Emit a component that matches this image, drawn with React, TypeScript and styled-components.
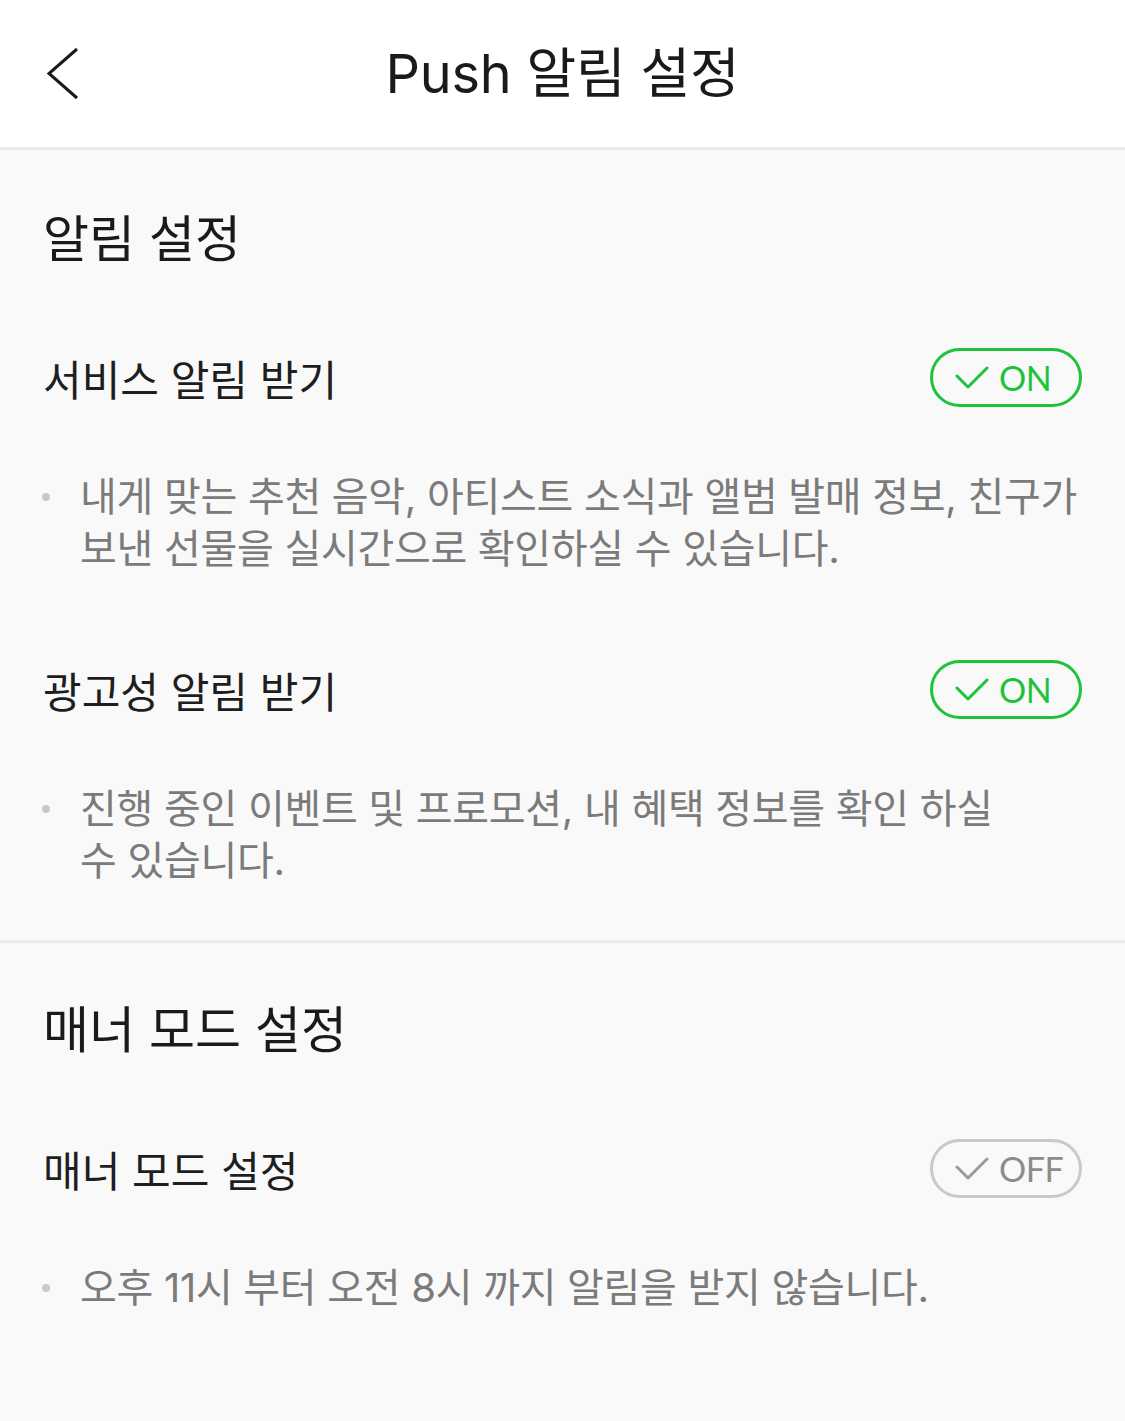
import React from 'react';
import styled, { createGlobalStyle } from 'styled-components';

type ToggleProps = {
  on?: boolean
}

type SettingItem = {
  label: string,
  on: boolean,
  lines: string[]
}

type SettingSection = {
  title: string,
  items: SettingItem[]
}

const sections: SettingSection[] = [
  {
    title: '알림 설정',
    items: [
      {
        label: '서비스 알림 받기',
        on: true,
        lines: [
          '내게 맞는 추천 음악, 아티스트 소식과 앨범 발매 정보, 친구가',
          '보낸 선물을 실시간으로 확인하실 수 있습니다.'
        ]
      },
      {
        label: '광고성 알림 받기',
        on: true,
        lines: [
          '진행 중인 이벤트 및 프로모션, 내 혜택 정보를 확인 하실',
          '수 있습니다.'
        ]
      }
    ]
  },
  {
    title: '매너 모드 설정',
    items: [
      {
        label: '매너 모드 설정',
        on: false,
        lines: ['오후 11시 부터 오전 8시 까지 알림을 받지 않습니다.']
      }
    ]
  }
];

const Toggle: React.FC<ToggleProps> = ({ on }) => (
  <ToggleButton on={on}>
    <svg width="34" height="24" viewBox="0 0 34 24" fill="none">
      <polyline points="2,10 13,21 32,2" stroke="currentColor" strokeWidth="3" strokeLinecap="round" strokeLinejoin="round" />
    </svg>
    <ToggleText>{on ? 'ON' : 'OFF'}</ToggleText>
  </ToggleButton>
);

const App: React.FC = () => {
  return (
    <>
      <GlobalStyle />
      <Page>
        <Header>
          <BackButton aria-label="뒤로">
            <svg width="34" height="54" viewBox="0 0 34 54" fill="none">
              <polyline points="31,2 3,26.5 31,51" stroke="#1a1a1a" strokeWidth="3" strokeLinejoin="miter" />
            </svg>
          </BackButton>
          <Title>Push 알림 설정</Title>
          <span />
        </Header>
        {sections.map((section) => (
          <Section key={section.title}>
            <SectionTitle>{section.title}</SectionTitle>
            <ItemList>
              {section.items.map((item) => (
                <Item key={item.label}>
                  <Row>
                    <RowLabel>{item.label}</RowLabel>
                    <Toggle on={item.on} />
                  </Row>
                  <Description>
                    <Bullet><Dot /></Bullet>
                    <DescText>
                      {item.lines.map((line) => <div key={line}>{line}</div>)}
                    </DescText>
                  </Description>
                </Item>
              ))}
            </ItemList>
          </Section>
        ))}
      </Page>
    </>
  );
}

const GlobalStyle = createGlobalStyle`
  html, body {
    margin: 0;
    padding: 0;
    background: #f9f9f9;
  }
  body {
    font-family: Inter, "Noto Sans CJK KR", sans-serif;
    -webkit-font-smoothing: antialiased;
  }
`;

const Page = styled.div`
  width: 1125px;
  min-height: 1421px;
  background: #f9f9f9;
`;

const Header = styled.header`
  display: grid;
  grid-template-columns: 1fr auto 1fr;
  align-items: center;
  height: 147px;
  background: #ffffff;
  border-bottom: 3px solid #ebebeb;
`;

const BackButton = styled.button`
  justify-self: start;
  display: flex;
  align-items: center;
  margin-left: 46px;
  padding: 0;
  border: none;
  background: none;
  cursor: pointer;
`;

const Title = styled.h1`
  margin: 0;
  font-size: 54px;
  font-weight: 400;
  color: #1a1a1a;
  letter-spacing: -0.2px;
  line-height: 1;
`;

const Section = styled.section`
  padding: 59px 43px 53px;
  & + & {
    border-top: 3px solid #ebebeb;
    padding-top: 57px;
  }
`;

const SectionTitle = styled.h2`
  margin: 0 0 79px;
  height: 60px;
  line-height: 60px;
  font-size: 50px;
  font-weight: 400;
  color: #1a1a1a;
`;

const ItemList = styled.div`
  display: flex;
  flex-direction: column;
  gap: 85px;
`;

const Item = styled.div`
  display: flex;
  flex-direction: column;
  gap: 64px;
`;

const Row = styled.div`
  display: flex;
  align-items: center;
  justify-content: space-between;
  height: 59px;
`;

const RowLabel = styled.div`
  font-size: 42px;
  color: #1e1e1e;
`;

const ToggleButton = styled.div<ToggleProps>`
  display: flex;
  align-items: center;
  gap: 10px;
  width: 152px;
  height: 59px;
  box-sizing: border-box;
  padding-left: 22px;
  border: 3px solid ${({ on }) => on ? '#1ec33c' : '#c9c9c9'};
  border-radius: 30px;
  color: ${({ on }) => on ? '#1ec33c' : '#8c8c8c'};
  svg {
    color: ${({ on }) => on ? '#1ec33c' : '#9a9a9a'};
  }
`;

const ToggleText = styled.span`
  font-family: Lato, "Noto Sans", sans-serif;
  font-size: 34px;
  line-height: 1;
  letter-spacing: -0.5px;
`;

const Description = styled.div`
  display: flex;
`;

const Bullet = styled.div`
  display: flex;
  align-items: center;
  width: 37px;
  height: 52px;
  flex-shrink: 0;
`;

const Dot = styled.span`
  width: 8px;
  height: 8px;
  margin-left: -1px;
  border-radius: 50%;
  background: #c8c8c8;
`;

const DescText = styled.div`
  font-size: 40px;
  line-height: 52px;
  color: #7b7b7b;
  letter-spacing: -0.3px;
  white-space: nowrap;
`;

export default App;
